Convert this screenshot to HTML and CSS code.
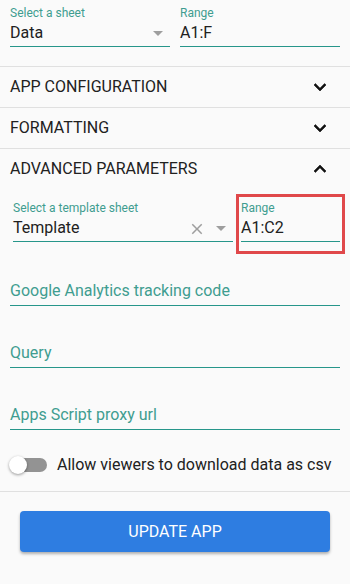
FILE: index.html
```html
<!DOCTYPE html>
<html>
<head>
<meta charset="utf-8">
<link rel="stylesheet" href="styles.css">
</head>
<body>
<div class="top-row">
  <div class="field grow">
    <div class="label">Select a sheet</div>
    <div class="control">
      <span class="value">Data</span>
      <svg class="arrow" width="24" height="24" viewBox="0 0 24 24"><path d="M7 10l5 5 5-5z" fill="#9e9e9e"/></svg>
    </div>
  </div>
  <div class="field grow">
    <div class="label">Range</div>
    <div class="control"><span class="value">A1:F</span></div>
  </div>
</div>

<section class="panel">
  <div class="panel-header"><span>APP CONFIGURATION</span>
    <svg class="chev" width="24" height="24" viewBox="0 0 24 24"><path d="M16.59 8.59L12 13.17 7.41 8.59 6 10l6 6 6-6z" fill="#111" stroke="#111" stroke-width="0.6"/></svg>
  </div>
</section>
<section class="panel">
  <div class="panel-header"><span>FORMATTING</span>
    <svg class="chev" width="24" height="24" viewBox="0 0 24 24"><path d="M16.59 8.59L12 13.17 7.41 8.59 6 10l6 6 6-6z" fill="#111" stroke="#111" stroke-width="0.6"/></svg>
  </div>
</section>
<section class="panel">
  <div class="panel-header"><span>ADVANCED PARAMETERS</span>
    <svg class="chev" width="24" height="24" viewBox="0 0 24 24"><path d="M12 8l-6 6 1.41 1.41L12 10.83l4.59 4.58L18 14z" fill="#111" stroke="#111" stroke-width="0.6"/></svg>
  </div>
  <div class="panel-body">
    <div class="template-row">
      <div class="field grow pad-top">
        <div class="label">Select a template sheet</div>
        <div class="control">
          <span class="value">Template</span>
          <svg class="clear" width="18" height="18" viewBox="0 0 24 24"><path d="M19 6.41L17.59 5 12 10.59 6.41 5 5 6.41 10.59 12 5 17.59 6.41 19 12 13.41 17.59 19 19 17.59 13.41 12z" fill="#9e9e9e"/></svg>
          <svg class="arrow" width="24" height="24" viewBox="0 0 24 24"><path d="M7 10l5 5 5-5z" fill="#9e9e9e"/></svg>
        </div>
      </div>
      <div class="highlight">
        <div class="field">
          <div class="label">Range</div>
          <div class="control"><span class="value">A1:C2</span></div>
        </div>
      </div>
    </div>
    <div class="text-field first">Google Analytics tracking code</div>
    <div class="text-field">Query</div>
    <div class="text-field">Apps Script proxy url</div>
    <div class="toggle-row">
      <span class="switch"><span class="track"></span><span class="knob"></span></span>
      <span class="toggle-label">Allow viewers to download data as csv</span>
    </div>
  </div>
</section>

<div class="footer">
  <button class="btn">UPDATE APP</button>
</div>
</body>
</html>
```
FILE: styles.css
```css
html, body {
  margin: 0;
  padding: 0;
  background: #fafafa;
  font-family: Roboto, "Noto Sans", sans-serif;
  color: #212121;
}

.top-row {
  display: flex;
  gap: 10px;
  padding: 6px 10px 19px;
  border-bottom: 1px solid #e0e0e0;
}

.field {
  display: flex;
  flex-direction: column;
  min-width: 0;
}
.grow { flex: 1; }
.pad-top { padding-top: 7px; }

.label {
  font-size: 12px;
  line-height: 14px;
  color: #3f9d90;
  white-space: nowrap;
}

.control {
  display: flex;
  align-items: center;
  height: 20px;
  margin-top: 3px;
  padding-bottom: 3px;
  border-bottom: 1px solid #26968a;
}

.value {
  flex: 1;
  font-size: 16px;
  line-height: 20px;
  color: #212121;
  white-space: nowrap;
}

.arrow {
  flex: none;
  margin: -2px 0;
}
.clear {
  flex: none;
  margin-top: 2px;
  margin-right: 3px;
}

.panel {
  border-bottom: 1px solid #e0e0e0;
}
.panel-header {
  display: flex;
  align-items: center;
  justify-content: space-between;
  height: 40px;
  padding: 0 18px 0 10px;
  font-size: 16px;
  line-height: 20px;
  color: #212121;
}
.chev { flex: none; }

.panel-body {
  padding-bottom: 14px;
}

.template-row {
  display: flex;
  align-items: flex-start;
  gap: 3px;
  margin-top: 5px;
  padding: 0 5px 0 13px;
}

.highlight {
  box-sizing: border-box;
  width: 109px;
  flex: none;
  border: 3px solid #e0484a;
  padding: 4px 2px 9px;
}

.text-field {
  margin: 37px 10px 0;
  font-size: 16px;
  line-height: 20px;
  color: #3f9d90;
  padding-bottom: 4px;
  border-bottom: 1px solid #26968a;
}
.text-field.first { margin-top: 27px; }

.toggle-row {
  display: flex;
  align-items: center;
  height: 24px;
  margin-top: 23px;
  padding-left: 9px;
}
.switch {
  position: relative;
  width: 38px;
  height: 24px;
  flex: none;
}
.track {
  position: absolute;
  left: 4px;
  top: 5px;
  width: 34px;
  height: 14px;
  border-radius: 7px;
  background: #939393;
}
.knob {
  position: absolute;
  left: 0;
  top: 3px;
  width: 18px;
  height: 18px;
  border-radius: 50%;
  background: #fff;
  box-shadow: 0 1px 3px rgba(0,0,0,0.4);
}
.toggle-label {
  margin-left: 10px;
  font-size: 16px;
  line-height: 20px;
  color: #212121;
  white-space: nowrap;
}

.footer {
  padding: 19px 20px;
}
.btn {
  display: block;
  width: 100%;
  height: 41px;
  border: none;
  border-radius: 4px;
  background: #2e7de1;
  color: #fff;
  font-family: Roboto, "Noto Sans", sans-serif;
  font-size: 16px;
  box-shadow: 0 2px 3px rgba(0,0,0,0.3);
}
```
